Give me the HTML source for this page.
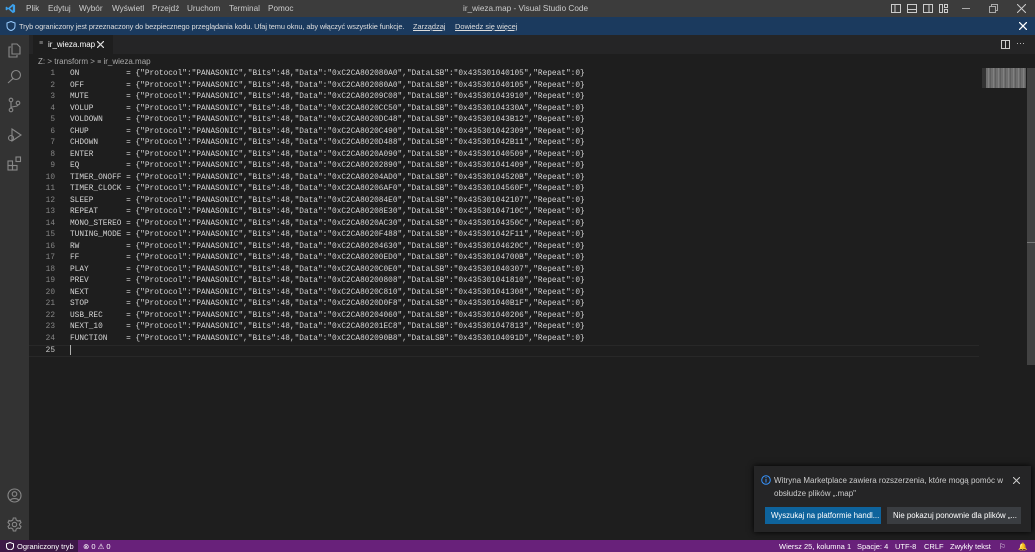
<!DOCTYPE html>
<html><head><meta charset="utf-8"><style>
*{margin:0;padding:0;box-sizing:border-box}
body{width:1035px;height:552px;overflow:hidden;background:#1e1e1e;font-family:"Liberation Sans",sans-serif;color:#ccc;position:relative}
.abs{position:absolute}
#title{left:0;top:0;width:1035px;height:17px;background:#3c3c3c;font-size:8.2px;color:#ccc}
#title span{position:absolute;top:4px}
#info{left:0;top:17px;width:1035px;height:18px;background:#1b3a5e;font-size:7.4px;color:#ddd}
#act{left:0;top:35px;width:29px;height:505px;background:#333}
#tabs{left:29px;top:35px;width:1006px;height:19px;background:#252526}
#tab{left:33px;top:35px;width:80px;height:19px;background:#1e1e1e;font-size:8px;color:#fff}
#crumb{left:38px;top:57px;font-size:8px;color:#aaa}
#code{left:29px;top:69px;font-family:"Liberation Mono",monospace;font-size:7.8px;line-height:11.52px;color:#d4d4d4;white-space:pre}
.ln{display:inline-block;width:26px;text-align:right;color:#858585;margin-right:15px}
#status{left:0;top:540px;width:1035px;height:12px;background:#68217a;font-size:7.5px;color:#fff}
#status span{position:absolute;top:1.5px}
#notif{left:754px;top:466px;width:277px;height:66px;background:#252526;box-shadow:0 0 6px #000;font-size:8px;color:#ccc}
svg{position:absolute}
</style></head><body>
<div id="title" class="abs">
<svg style="left:5px;top:3px" width="11" height="11" viewBox="0 0 24 24"><path d="M17 2 L22 4.5 V19.5 L17 22 L7 13 L3 16 L1.5 15 V9 L3 8 L7 11 Z M17 7 L11 12 L17 17 Z" fill="#3ca0ea"/></svg>
<span style="left:26px">Plik</span><span style="left:48px">Edytuj</span><span style="left:79px">Wybór</span><span style="left:112px">Wyświetl</span><span style="left:152px">Przejdź</span><span style="left:187px">Uruchom</span><span style="left:229px">Terminal</span><span style="left:268px">Pomoc</span>
<span style="left:463px">ir_wieza.map - Visual Studio Code</span>
<svg style="left:891px;top:4px" width="10" height="9"><rect x="0.5" y="0.5" width="9" height="8" fill="none" stroke="#ccc"/><line x1="4" y1="0" x2="4" y2="9" stroke="#ccc"/></svg>
<svg style="left:907px;top:4px" width="10" height="9"><rect x="0.5" y="0.5" width="9" height="8" fill="none" stroke="#ccc"/><line x1="0" y1="5.5" x2="10" y2="5.5" stroke="#ccc"/></svg>
<svg style="left:923px;top:4px" width="10" height="9"><rect x="0.5" y="0.5" width="9" height="8" fill="none" stroke="#ccc"/><line x1="6" y1="0" x2="6" y2="9" stroke="#ccc"/></svg>
<svg style="left:939px;top:4px" width="10" height="9"><rect x="0.5" y="0.5" width="3" height="8" fill="none" stroke="#ccc"/><rect x="5.5" y="0.5" width="3" height="3" fill="none" stroke="#ccc"/><rect x="5.5" y="5.5" width="3" height="3" fill="none" stroke="#ccc"/></svg>
<svg style="left:962px;top:8px" width="8" height="2"><line x1="0" y1="0.5" x2="8" y2="0.5" stroke="#aaa"/></svg>
<svg style="left:989px;top:4px" width="9" height="9"><rect x="0.5" y="2.5" width="6" height="6" fill="none" stroke="#aaa"/><path d="M2.5 2.5V0.5H8.5V6.5H6.5" fill="none" stroke="#aaa"/></svg>
<svg style="left:1017px;top:4px" width="9" height="9"><path d="M0 0L9 9M9 0L0 9" stroke="#ccc"/></svg>
</div>
<div id="info" class="abs">
<svg style="left:6px;top:4px" width="10" height="10"><path d="M5 0.5L9 2V5C9 7.5 7 9 5 9.5C3 9 1 7.5 1 5V2Z" fill="none" stroke="#9cf"/></svg>
<span class="abs" style="left:19px;top:5px;letter-spacing:-0.1px">Tryb ograniczony jest przeznaczony do bezpiecznego przeglądania kodu. Ufaj temu oknu, aby włączyć wszystkie funkcje.</span>
<span class="abs" style="left:413px;top:5px;text-decoration:underline">Zarządzaj</span>
<span class="abs" style="left:455px;top:5px;text-decoration:underline">Dowiedz się więcej</span>
<svg style="left:1019px;top:5px" width="8" height="8"><path d="M0 0L8 8M8 0L0 8" stroke="#fff" stroke-width="1.3"/></svg>
</div>
<div id="act" class="abs">
<svg style="left:7px;top:8px" width="15" height="15" viewBox="0 0 15 15" fill="none" stroke="#888" stroke-width="1.1"><path d="M4 4H2V14H10V12"/><path d="M5 1H10L13 4V11H5Z"/></svg>
<svg style="left:7px;top:34px" width="15" height="15" viewBox="0 0 15 15" fill="none" stroke="#888" stroke-width="1.1"><circle cx="9" cy="6" r="4.5"/><path d="M6 9.5L1 14"/></svg>
<svg style="left:7px;top:62px" width="15" height="16" viewBox="0 0 15 16" fill="none" stroke="#888" stroke-width="1.1"><circle cx="4" cy="3" r="1.8"/><circle cx="4" cy="13" r="1.8"/><circle cx="11" cy="6" r="1.8"/><path d="M4 5V11M11 8C11 10 4 9 4 11"/></svg>
<svg style="left:7px;top:92px" width="15" height="15" viewBox="0 0 15 15" fill="none" stroke="#888" stroke-width="1.1"><path d="M5 2L14 8L5 14Z"/><circle cx="4" cy="11" r="2.5"/></svg>
<svg style="left:7px;top:121px" width="15" height="15" viewBox="0 0 15 15" fill="none" stroke="#888" stroke-width="1.1"><rect x="1" y="5" width="4.5" height="4.5"/><rect x="1" y="9.5" width="4.5" height="4.5"/><rect x="5.5" y="9.5" width="4.5" height="4.5"/><rect x="9" y="1" width="4.5" height="4.5"/></svg>
<svg style="left:7px;top:453px" width="15" height="15" viewBox="0 0 15 15" fill="none" stroke="#888" stroke-width="1.1"><circle cx="7.5" cy="7.5" r="6.5"/><circle cx="7.5" cy="6" r="2.3"/><path d="M3.3 12.3C4.5 10 10.5 10 11.7 12.3"/></svg>
<svg style="left:7px;top:482px" width="15" height="15" viewBox="0 0 15 15" fill="none" stroke="#888" stroke-width="1.1"><circle cx="7.5" cy="7.5" r="2.2"/><path d="M6.3 1H8.7L9.2 3L11 4L13 3.4L14 5.5L12.5 7V8L14 9.5L13 11.6L11 11L9.2 12L8.7 14H6.3L5.8 12L4 11L2 11.6L1 9.5L2.5 8V7L1 5.5L2 3.4L4 4L5.8 3Z"/></svg>
</div>
<div id="tabs" class="abs"></div>
<div id="tab" class="abs"><span class="abs" style="left:6px;top:5px;color:#aaa;font-size:7px">≡</span><span class="abs" style="left:15px;top:5px">ir_wieza.map</span><svg style="left:64px;top:6px" width="7" height="7"><path d="M0 0L7 7M7 0L0 7" stroke="#ddd" stroke-width="1.2"/></svg></div>
<svg style="left:1001px;top:40px" width="9" height="9"><rect x="0.5" y="0.5" width="8" height="8" fill="none" stroke="#ccc"/><line x1="4.5" y1="0" x2="4.5" y2="9" stroke="#ccc"/></svg>
<span class="abs" style="left:1016px;top:38px;font-size:9px;color:#ccc">···</span>
<div id="crumb" class="abs">Z: &gt; transform &gt; <span style="font-size:7px">≡</span> ir_wieza.map</div>
<div class="abs" style="left:29px;top:345px;width:950px;height:12px;border-top:1px solid #282828;border-bottom:1px solid #282828"></div>
<div id="code" class="abs"><span class="ln">1</span>ON          = {"Protocol":"PANASONIC","Bits":48,"Data":"0xC2CA802080A0","DataLSB":"0x435301040105","Repeat":0}
<span class="ln">2</span>OFF         = {"Protocol":"PANASONIC","Bits":48,"Data":"0xC2CA802080A0","DataLSB":"0x435301040105","Repeat":0}
<span class="ln">3</span>MUTE        = {"Protocol":"PANASONIC","Bits":48,"Data":"0xC2CA80209C08","DataLSB":"0x435301043910","Repeat":0}
<span class="ln">4</span>VOLUP       = {"Protocol":"PANASONIC","Bits":48,"Data":"0xC2CA8020CC50","DataLSB":"0x43530104330A","Repeat":0}
<span class="ln">5</span>VOLDOWN     = {"Protocol":"PANASONIC","Bits":48,"Data":"0xC2CA8020DC48","DataLSB":"0x435301043B12","Repeat":0}
<span class="ln">6</span>CHUP        = {"Protocol":"PANASONIC","Bits":48,"Data":"0xC2CA8020C490","DataLSB":"0x435301042309","Repeat":0}
<span class="ln">7</span>CHDOWN      = {"Protocol":"PANASONIC","Bits":48,"Data":"0xC2CA8020D488","DataLSB":"0x435301042B11","Repeat":0}
<span class="ln">8</span>ENTER       = {"Protocol":"PANASONIC","Bits":48,"Data":"0xC2CA8020A090","DataLSB":"0x435301040509","Repeat":0}
<span class="ln">9</span>EQ          = {"Protocol":"PANASONIC","Bits":48,"Data":"0xC2CA80202890","DataLSB":"0x435301041409","Repeat":0}
<span class="ln">10</span>TIMER_ONOFF = {"Protocol":"PANASONIC","Bits":48,"Data":"0xC2CA80204AD0","DataLSB":"0x43530104520B","Repeat":0}
<span class="ln">11</span>TIMER_CLOCK = {"Protocol":"PANASONIC","Bits":48,"Data":"0xC2CA80206AF0","DataLSB":"0x43530104560F","Repeat":0}
<span class="ln">12</span>SLEEP       = {"Protocol":"PANASONIC","Bits":48,"Data":"0xC2CA802084E0","DataLSB":"0x435301042107","Repeat":0}
<span class="ln">13</span>REPEAT      = {"Protocol":"PANASONIC","Bits":48,"Data":"0xC2CA80208E30","DataLSB":"0x43530104710C","Repeat":0}
<span class="ln">14</span>MONO_STEREO = {"Protocol":"PANASONIC","Bits":48,"Data":"0xC2CA8020AC30","DataLSB":"0x43530104350C","Repeat":0}
<span class="ln">15</span>TUNING_MODE = {"Protocol":"PANASONIC","Bits":48,"Data":"0xC2CA8020F488","DataLSB":"0x435301042F11","Repeat":0}
<span class="ln">16</span>RW          = {"Protocol":"PANASONIC","Bits":48,"Data":"0xC2CA80204630","DataLSB":"0x43530104620C","Repeat":0}
<span class="ln">17</span>FF          = {"Protocol":"PANASONIC","Bits":48,"Data":"0xC2CA80200ED0","DataLSB":"0x43530104700B","Repeat":0}
<span class="ln">18</span>PLAY        = {"Protocol":"PANASONIC","Bits":48,"Data":"0xC2CA8020C0E0","DataLSB":"0x435301040307","Repeat":0}
<span class="ln">19</span>PREV        = {"Protocol":"PANASONIC","Bits":48,"Data":"0xC2CA80200808","DataLSB":"0x435301041810","Repeat":0}
<span class="ln">20</span>NEXT        = {"Protocol":"PANASONIC","Bits":48,"Data":"0xC2CA8020C810","DataLSB":"0x435301041308","Repeat":0}
<span class="ln">21</span>STOP        = {"Protocol":"PANASONIC","Bits":48,"Data":"0xC2CA8020D0F8","DataLSB":"0x435301040B1F","Repeat":0}
<span class="ln">22</span>USB_REC     = {"Protocol":"PANASONIC","Bits":48,"Data":"0xC2CA80204060","DataLSB":"0x435301040206","Repeat":0}
<span class="ln">23</span>NEXT_10     = {"Protocol":"PANASONIC","Bits":48,"Data":"0xC2CA80201EC8","DataLSB":"0x435301047813","Repeat":0}
<span class="ln">24</span>FUNCTION    = {"Protocol":"PANASONIC","Bits":48,"Data":"0xC2CA802090B8","DataLSB":"0x43530104091D","Repeat":0}
<span class="ln" style="color:#c6c6c6">25</span><span style="display:inline-block;width:1px;height:10px;background:#aeafad;vertical-align:middle"></span></div>
<div class="abs" style="left:982px;top:68px;width:44px;height:20px;background:repeating-linear-gradient(90deg,#666 0,#888 2px,#555 3px,#777 5px)"></div>
<div class="abs" style="left:982px;top:68px;width:4px;height:20px;background:#333"></div>
<div class="abs" style="left:1027px;top:68px;width:8px;height:297px;background:#424242"></div>
<div class="abs" style="left:1027px;top:242px;width:8px;height:1px;background:#777"></div>
<div id="notif" class="abs">
<svg style="left:7px;top:9px" width="10" height="10"><circle cx="5" cy="5" r="4.3" fill="none" stroke="#3794ff"/><line x1="5" y1="4" x2="5" y2="7.5" stroke="#3794ff"/><circle cx="5" cy="2.7" r="0.6" fill="#3794ff"/></svg>
<span class="abs" style="left:20px;top:10px">Witryna Marketplace zawiera rozszerzenia, które mogą pomóc w</span>
<span class="abs" style="left:20px;top:23px">obsłudze plików „.map"</span>
<svg style="left:259px;top:11px" width="7" height="7"><path d="M0 0L7 7M7 0L0 7" stroke="#ccc"/></svg>
<div class="abs" style="left:11px;top:41px;width:116px;height:17px;background:#0e639c;color:#fff;font-size:7.8px;padding:4px 0 0 6px;white-space:nowrap">Wyszukaj na platformie handl...</div>
<div class="abs" style="left:133px;top:41px;width:134px;height:17px;background:#3a3d41;color:#fff;font-size:7.8px;padding:4px 0 0 6px;white-space:nowrap">Nie pokazuj ponownie dla plików „...</div>
</div>
<div id="status" class="abs">
<div class="abs" style="left:0;top:0;width:78px;height:12px;background:#3c1846"></div>
<svg style="left:6px;top:2px" width="8" height="8"><path d="M4 0.5L7.5 1.8V4.5C7.5 6.5 6 7.5 4 8C2 7.5 0.5 6.5 0.5 4.5V1.8Z" fill="none" stroke="#fff"/></svg>
<span style="left:17px">Ograniczony tryb</span>
<span style="left:83px">⊗ 0 ⚠ 0</span>
<span style="left:779px">Wiersz 25, kolumna 1</span>
<span style="left:857px">Spacje: 4</span>
<span style="left:895px">UTF-8</span>
<span style="left:924px">CRLF</span>
<span style="left:950px">Zwykły tekst</span>
<span style="left:999px">⚐</span>
<span style="left:1018px">🔔</span>
</div>
</body></html>
